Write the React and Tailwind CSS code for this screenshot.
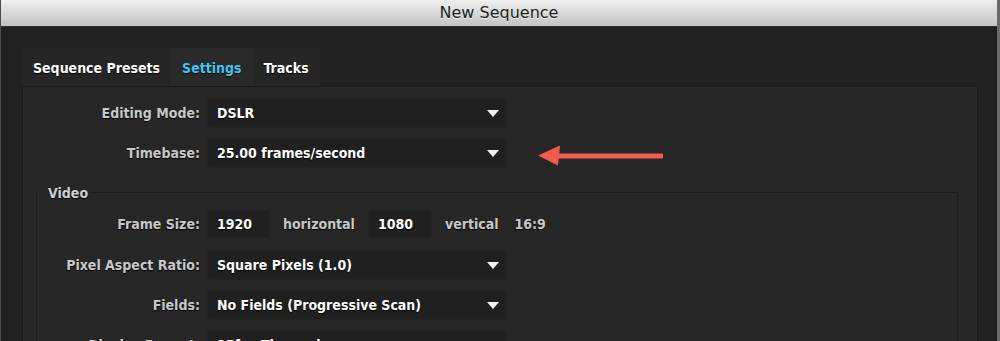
import React from 'react';

const FONT = "font-['DejaVu_Sans_Condensed','DejaVu_Sans',sans-serif]";

function Arrow() {
  return (
    <svg width="12" height="7" viewBox="0 0 12 7" className="shrink-0">
      <path d="M0 0 H12 L6 7 Z" fill="#f2f2f2" />
    </svg>
  );
}

function Dropdown({ value }) {
  return (
    <div className="ml-[8px] w-[298px] h-[28px] bg-[#202020] rounded-[3px] shadow-[0_0_2px_#1c1c1c] flex items-center justify-between pl-[9px] pr-[7px]">
      <span className="text-white [text-shadow:0_1px_1px_#000]">{value}</span>
      <Arrow />
    </div>
  );
}

function Row({ label, labelWidth, children, className = '' }) {
  return (
    <div className={`flex items-center h-[28px] ${className}`}>
      <span className="text-right text-[#c8c8c8] [text-shadow:0_1px_1px_#000]" style={{ width: labelWidth }}>
        {label}
      </span>
      {children}
    </div>
  );
}

function NumberBox({ value, width }) {
  return (
    <div className="h-[26px] bg-[#202020] rounded-[2px] shadow-[0_0_2px_#1c1c1c] flex items-center pl-[9px] text-white [text-shadow:0_1px_1px_#000]" style={{ width }}>
      {value}
    </div>
  );
}

export default function App() {
  const tabs = ['Sequence Presets', 'Settings', 'Tracks'];

  return (
    <div className={`relative w-[1000px] h-[341px] overflow-hidden bg-[#212121] border-l border-[#4a4a4a] border-r-[3px] border-r-[#6a6a6a] ${FONT} font-bold text-[14px] leading-none`}>
      {/* title bar */}
      <div className="h-[27px] bg-gradient-to-b from-[#eeeeee] to-[#c3c3c3] border-b border-[#2e2e2e] flex items-center justify-center">
        <span className="font-['DejaVu_Sans',sans-serif] font-normal text-[16px] text-[#1c1c1c] [text-shadow:0_1px_0_#f4f4f4]">
          New Sequence
        </span>
      </div>

      <div className="pl-[21px] pr-[19px] pt-[21px]">
        {/* tabs */}
        <div className="flex h-[38px] w-fit bg-[#262626]">
          {tabs.map((t) => (
            <div
              key={t}
              className={`flex items-center pt-[2px] px-[11px] [text-shadow:0_1px_1px_#000] ${
                t === 'Settings' ? 'bg-[#2a2a2a] text-[#3fc6f3]' : 'text-white'
              }`}
            >
              {t}
            </div>
          ))}
        </div>

        {/* settings panel */}
        <div className="border border-[#1b1b1b] bg-[#272727] pt-[12px] pb-[20px]">
          <Row label="Editing Mode:" labelWidth={177}>
            <Dropdown value="DSLR" />
          </Row>
          <Row label="Timebase:" labelWidth={177} className="mt-[12px]">
            <Dropdown value="25.00 frames/second" />
          </Row>

          <fieldset className="ml-[13px] mr-[19px] mt-[17px] border border-[#1c1c1c] p-0 pb-[20px]">
            <legend className="pl-[11px] pr-[2px] h-[17px] flex items-center font-bold text-[#d0d0d0] [text-shadow:0_1px_1px_#000]">
              Video
            </legend>

            <Row label="Frame Size:" labelWidth={163} className="mt-[9px]">
              <div className="ml-[8px] flex items-center">
                <NumberBox value="1920" width={60} />
                <span className="ml-[15px] text-[#c8c8c8] [text-shadow:0_1px_1px_#000]">horizontal</span>
                <div className="ml-[14px]">
                  <NumberBox value="1080" width={62} />
                </div>
                <span className="ml-[14px] text-[#c8c8c8] [text-shadow:0_1px_1px_#000]">vertical</span>
                <span className="ml-[16px] text-[#c8c8c8] [text-shadow:0_1px_1px_#000]">16:9</span>
              </div>
            </Row>
            <Row label="Pixel Aspect Ratio:" labelWidth={163} className="mt-[13px]">
              <Dropdown value="Square Pixels (1.0)" />
            </Row>
            <Row label="Fields:" labelWidth={163} className="mt-[12px]">
              <Dropdown value="No Fields (Progressive Scan)" />
            </Row>
            <Row label="Display Format:" labelWidth={163} className="mt-[12px]">
              <Dropdown value="25fps Timecode" />
            </Row>
          </fieldset>
        </div>
      </div>

      {/* annotation arrow */}
      <svg className="absolute left-[535px] top-[143px]" width="130" height="26" viewBox="0 0 130 26">
        <g fill="#f25b4e">
          <path d="M2 12.5 L24 2.5 L22 22.5 Z" />
          <rect x="20" y="10.5" width="107" height="5" rx="1" />
        </g>
      </svg>
    </div>
  );
}
